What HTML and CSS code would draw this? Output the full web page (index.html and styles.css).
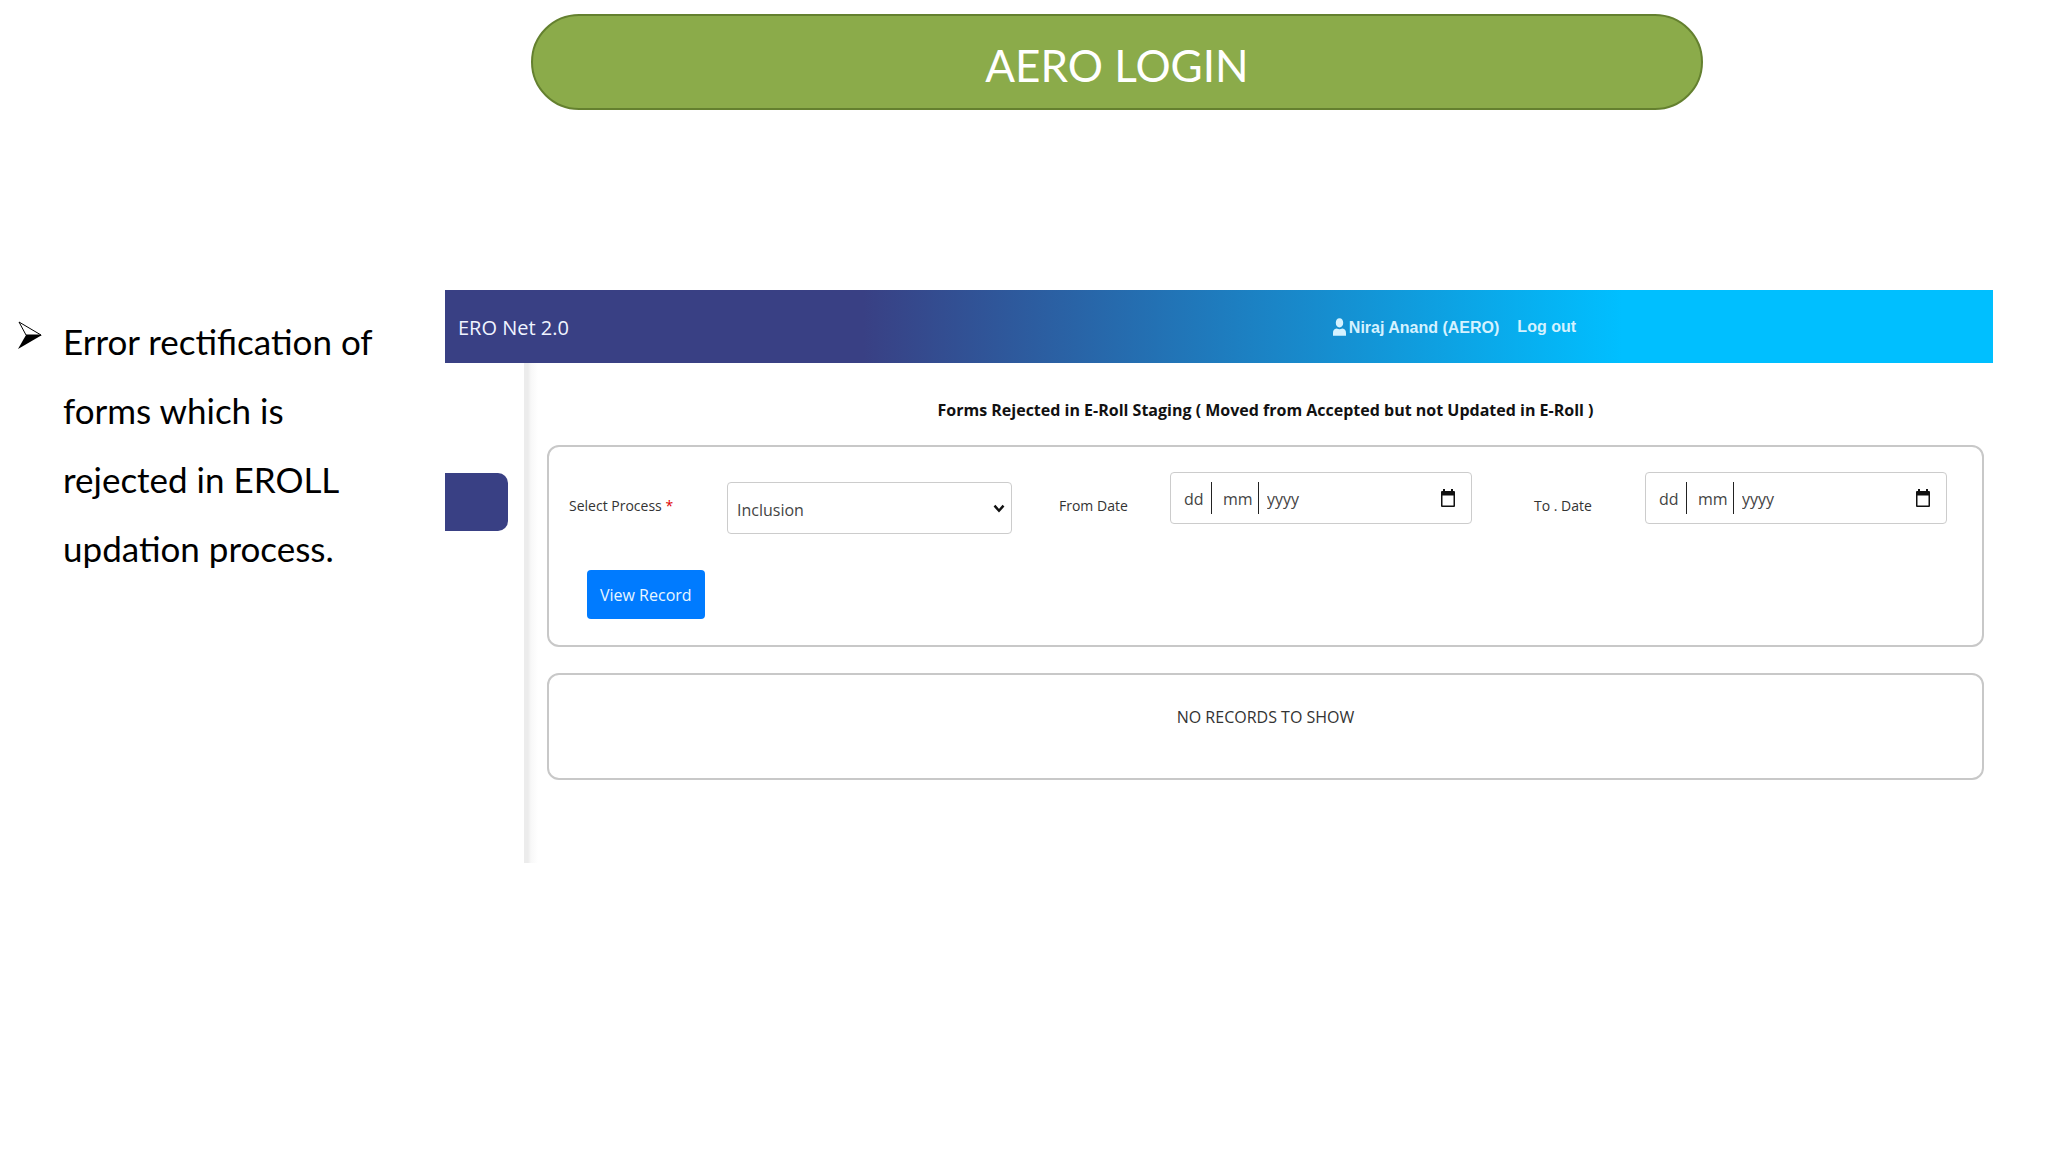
FILE: index.html
```html
<!DOCTYPE html>
<html lang="en">
<head>
<meta charset="utf-8">
<title>AERO Login</title>
<link rel="stylesheet" href="styles.css">
</head>
<body>
<h1 class="banner">AERO LOGIN</h1>
<div class="slide">
  <ul class="notes">
    <li class="note">
      <svg class="arrow" viewBox="0 0 24 28" aria-hidden="true"><path d="M1 1L23 14H8Z" fill="#fff" stroke="#000" stroke-width="1"/><path d="M0 28L8 14H24Z"/></svg>
      <span>Error rectification of forms which is rejected in EROLL updation process.</span>
    </li>
  </ul>
  <div class="app">
    <header class="topbar">
      <span class="brand">ERO Net 2.0</span>
      <nav class="account">
        <a class="user" href="#"><svg class="user-icon" viewBox="0 0 14 20" aria-hidden="true"><path d="M7 0C9.500 0 11 2 11 5S9.500 10 7 10 3 8 3 5 4.500 0 7 0ZM4 11Q7 12.500 10 11C13 11.500 14 13 14 16V19H0V16C0 13 1 11.500 4 11Z" fill="currentColor"/></svg>Niraj Anand (AERO)</a>
        <a href="#">Log out</a>
      </nav>
    </header>
    <div class="body">
      <aside class="side"><div class="side-item"></div></aside>
      <main class="main">
        <h2 class="title">Forms Rejected in E-Roll Staging ( Moved from Accepted but not Updated in E-Roll )</h2>
        <form class="panel filters">
          <div class="fields">
            <label class="label" for="process">Select Process <span class="required">*</span></label>
            <div class="select-wrap">
              <select class="select" id="process"><option>Inclusion</option></select>
              <svg class="chevron" viewBox="0 0 10 8" aria-hidden="true"><path d="M1 1.500L5 6L9 1.500" fill="none" stroke="#111" stroke-width="2.200"/></svg>
            </div>
            <label class="label label-from" for="from-day">From Date</label>
            <div class="date">
              <input class="part day" id="from-day" placeholder="dd" aria-label="From day">
              <input class="part month" placeholder="mm" aria-label="From month">
              <input class="part year" placeholder="yyyy" aria-label="From year">
              <button class="picker" type="button" aria-label="Pick from date"><svg class="calendar" viewBox="0 0 14 18"><path d="M2 0H4V2H10V0H12V2H13Q14 2 14 3V17Q14 18 13 18H1Q0 18 0 17V3Q0 2 1 2H2ZM1.500 6.500V16.500H12.500V6.500Z" fill="#111" fill-rule="evenodd"/></svg></button>
            </div>
            <label class="label label-to" for="to-day">To . Date</label>
            <div class="date">
              <input class="part day" id="to-day" placeholder="dd" aria-label="To day">
              <input class="part month" placeholder="mm" aria-label="To month">
              <input class="part year" placeholder="yyyy" aria-label="To year">
              <button class="picker" type="button" aria-label="Pick to date"><svg class="calendar" viewBox="0 0 14 18"><path d="M2 0H4V2H10V0H12V2H13Q14 2 14 3V17Q14 18 13 18H1Q0 18 0 17V3Q0 2 1 2H2ZM1.500 6.500V16.500H12.500V6.500Z" fill="#111" fill-rule="evenodd"/></svg></button>
            </div>
          </div>
          <button class="view" type="button">View Record</button>
        </form>
        <section class="panel results">NO RECORDS TO SHOW</section>
      </main>
    </div>
  </div>
</div>
</body>
</html>
```
FILE: styles.css
```css
* { box-sizing: border-box; }

body {
  margin: 0;
  background: #fff;
  color: #333;
  font-family: "Open Sans", "Noto Sans", sans-serif;
  font-size: 16px;
}

.banner {
  margin: 14px 345px 0 531px;
  padding: 7px 0 0;
  border: 2px solid #64802f;
  border-radius: 48px;
  background: #8bab4a;
  color: #fff;
  font: 400 44px/85px Lato, sans-serif;
  text-align: center;
}

.slide {
  display: grid;
  grid-template-columns: 445px 1fr;
  padding: 180px 55px 0 0;
}

.notes {
  margin: 0;
  padding: 17px 40px 0 18px;
  list-style: none;
}

.note {
  display: flex;
  gap: 21px;
  color: #000;
  font: 400 35px/69px Lato, sans-serif;
}

.arrow { flex: none; width: 24px; height: 28px; margin-top: 14px; }

.topbar {
  display: flex;
  align-items: center;
  height: 73px;
  padding: 2px 417px 0 13px;
  background: linear-gradient(90deg, #394084 27%, #00bfff 76%);
  color: #f0f4ff;
}

.brand { font-size: 20px; }

.account { display: flex; gap: 18px; margin-left: auto; font: 700 16px "Liberation Sans", Arial, sans-serif; }
.account a { color: #d5f2ff; text-decoration: none; }
.user { display: flex; align-items: center; gap: 3px; }
.user-icon { width: 13px; height: 19px; }

.body { display: grid; grid-template-columns: 79px 1fr; min-height: 500px; }
.side { padding: 110px 16px 0 0; }
.side-item { height: 58px; border-radius: 0 10px 10px 0; background: #394084; }

.main {
  padding: 31px 9px 0 23px;
  background: linear-gradient(90deg, #ececec 4px, #f8f8f8 7px, #fff 14px);
}

.title {
  margin: 0 0 19px;
  color: #111;
  font-size: 16px;
  line-height: 32px;
  text-align: center;
}

.panel { border: 2px solid #c8c8c8; border-radius: 12px; background: #fff; }

.filters { min-height: 202px; padding: 25px 35px 24px 20px; }

.fields {
  display: grid;
  grid-template-columns: 158px 285fr 158px 302fr 173px 302fr;
  align-items: start;
}

.label { padding-top: 24px; font-size: 14px; line-height: 20px; }
.label-from { padding-left: 47px; }
.label-to { padding-left: 62px; }
.required { color: #e00000; }

.select-wrap { display: grid; align-items: center; margin-top: 10px; }
.select, .chevron { grid-area: 1 / 1; }
.select {
  width: 100%;
  height: 52px;
  padding: 3px 9px 0;
  border: 1px solid #ccc;
  border-radius: 4px;
  background: #fff;
  color: #444;
  font: 16px "Open Sans", sans-serif;
  appearance: none;
}
.chevron { justify-self: end; width: 12px; height: 9px; margin-right: 7px; pointer-events: none; }

.date {
  display: flex;
  align-items: center;
  height: 52px;
  padding: 0 16px 0 13px;
  border: 1px solid #ccc;
  border-radius: 4px;
  background: #fff;
}
.part {
  height: 32px;
  padding: 2px 0 0;
  border: 0;
  border-right: 1px solid #222;
  border-radius: 0;
  background: none;
  color: #444;
  font: 16px "Open Sans", sans-serif;
}
.part::placeholder { color: #444; opacity: 1; }
.day { width: 28px; }
.month { width: 47px; padding-left: 11px; }
.year { width: 60px; padding-left: 8px; border-right: 0; }
.picker { display: flex; margin-left: auto; padding: 0; border: 0; background: none; }
.calendar { width: 14px; height: 18px; }

.view {
  display: block;
  height: 49px;
  margin: 36px 0 0 18px;
  padding: 0 13px;
  border: 0;
  border-radius: 4px;
  background: #007bff;
  color: #e8f6ff;
  font: 16px "Open Sans", sans-serif;
}

.results { margin-top: 26px; min-height: 107px; padding: 26px; line-height: 32px; text-align: center; }
```
